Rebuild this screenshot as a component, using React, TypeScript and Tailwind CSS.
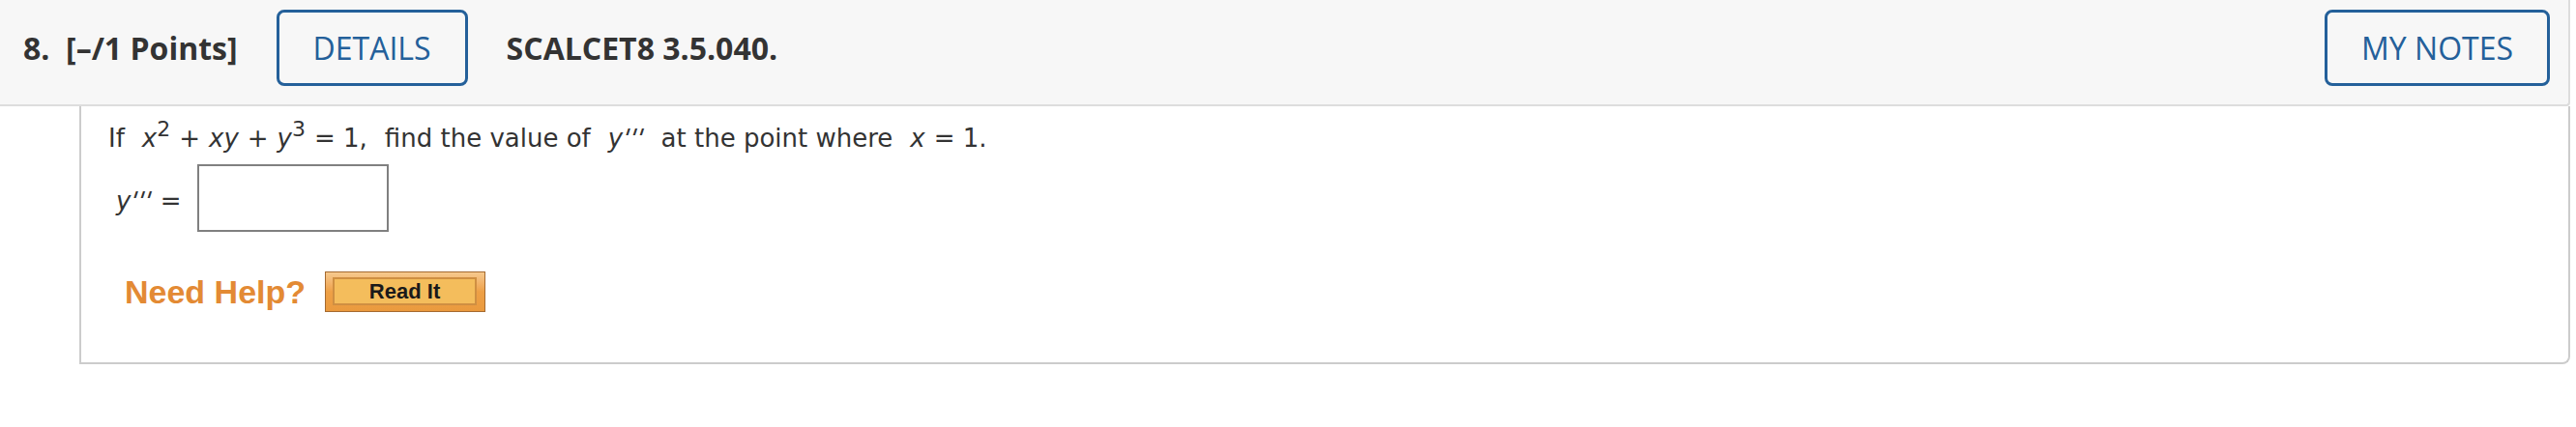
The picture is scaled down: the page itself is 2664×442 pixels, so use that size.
import React from 'react';

const headFont = { fontFamily: '"Open Sans", "Noto Sans", sans-serif' };
const bodyFont = { fontFamily: '"DejaVu Sans", Verdana, sans-serif' };
const helpFont = { fontFamily: '"Liberation Sans", Arial, sans-serif' };

function HeaderButton({ label }: { label: string }) {
  return (
    <button className="h-[79px] px-[35px] rounded-[8px] border-[3px] border-[#24609a] text-[#24609a] text-[32px] font-medium leading-none bg-transparent">
      {label}
    </button>
  );
}

// y with three slanted prime marks
function YTriplePrime() {
  return (
    <span className="italic">
      y<span className="inline-block -skew-x-[18deg]">'''</span>
    </span>
  );
}

function Question() {
  return (
    <div className="text-[26px] text-[#333333] leading-[36px] h-[36px] flex items-center whitespace-nowrap" style={bodyFont}>
      <span>If</span>
      <span className="ml-[18px] italic">
        x<sup className="not-italic text-[22px]">2</sup>
      </span>
      <span className="ml-[9px]">+</span>
      <span className="ml-[9px] italic">xy</span>
      <span className="ml-[9px]">+</span>
      <span className="ml-[9px] italic">
        y<sup className="not-italic text-[22px]">3</sup>
      </span>
      <span className="ml-[9px]">= 1,</span>
      <span className="ml-[18px]">find the value of</span>
      <span className="ml-[18px]">
        <YTriplePrime />
      </span>
      <span className="ml-[18px]">at the point where</span>
      <span className="ml-[18px] italic">x</span>
      <span className="ml-[9px]">= 1.</span>
    </div>
  );
}

export default function App() {
  return (
    <div className="w-[2658px] bg-white min-h-[442px]">
      {/* top bar */}
      <div
        className="flex items-center h-[110px] pt-[10px] pb-[19px] pl-[24px] pr-[19px] bg-[#f7f7f7] border-b-2 border-r-2 border-[#dddddd] rounded-br-[4px]"
        style={headFont}
      >
        <div className="text-[32px] font-bold text-[#333333] whitespace-pre leading-none">8.  [–/1 Points]</div>
        <div className="ml-[40px]">
          <HeaderButton label="DETAILS" />
        </div>
        <div className="ml-[40px] text-[32px] font-bold text-[#333333] leading-none">SCALCET8 3.5.040.</div>
        <div className="ml-auto">
          <HeaderButton label="MY NOTES" />
        </div>
      </div>

      {/* question box */}
      <div className="ml-[82px] border-l-2 border-r-2 border-b-2 border-[#cccccc] rounded-br-[8px] pl-[28px] pt-[15px] pb-[52px] flex flex-col">
        <Question />

        <div className="mt-[9px] flex items-center">
          <div className="pt-[6px] text-[26px] text-[#333333] leading-[26px] whitespace-nowrap" style={bodyFont}>
            <span className="ml-[8px]">
              <YTriplePrime />
            </span>
            <span className="ml-[9px]">=</span>
          </div>
          <input
            type="text"
            className="ml-[16px] w-[198px] h-[70px] border-2 border-[#808080] bg-white outline-none"
          />
        </div>

        <div className="mt-[41px] flex items-center pl-[17px]" style={helpFont}>
          <span className="text-[34px] font-bold text-[#e38a34] leading-none">Need Help?</span>
          <div className="ml-[20px] w-[166px] h-[42px] border border-[#a56a30] bg-gradient-to-b from-[#f6c98e] via-[#eea046] to-[#ea9a3e] pl-[7px] pr-[8px] pt-[5px] pb-[6px]">
            <div className="w-full h-full border-2 border-[#cf8f42] bg-[#f4bd5c] flex items-center justify-center">
              <span className="text-[22px] font-bold text-[#1a1a1a] leading-none">Read It</span>
            </div>
          </div>
        </div>
      </div>
    </div>
  );
}
